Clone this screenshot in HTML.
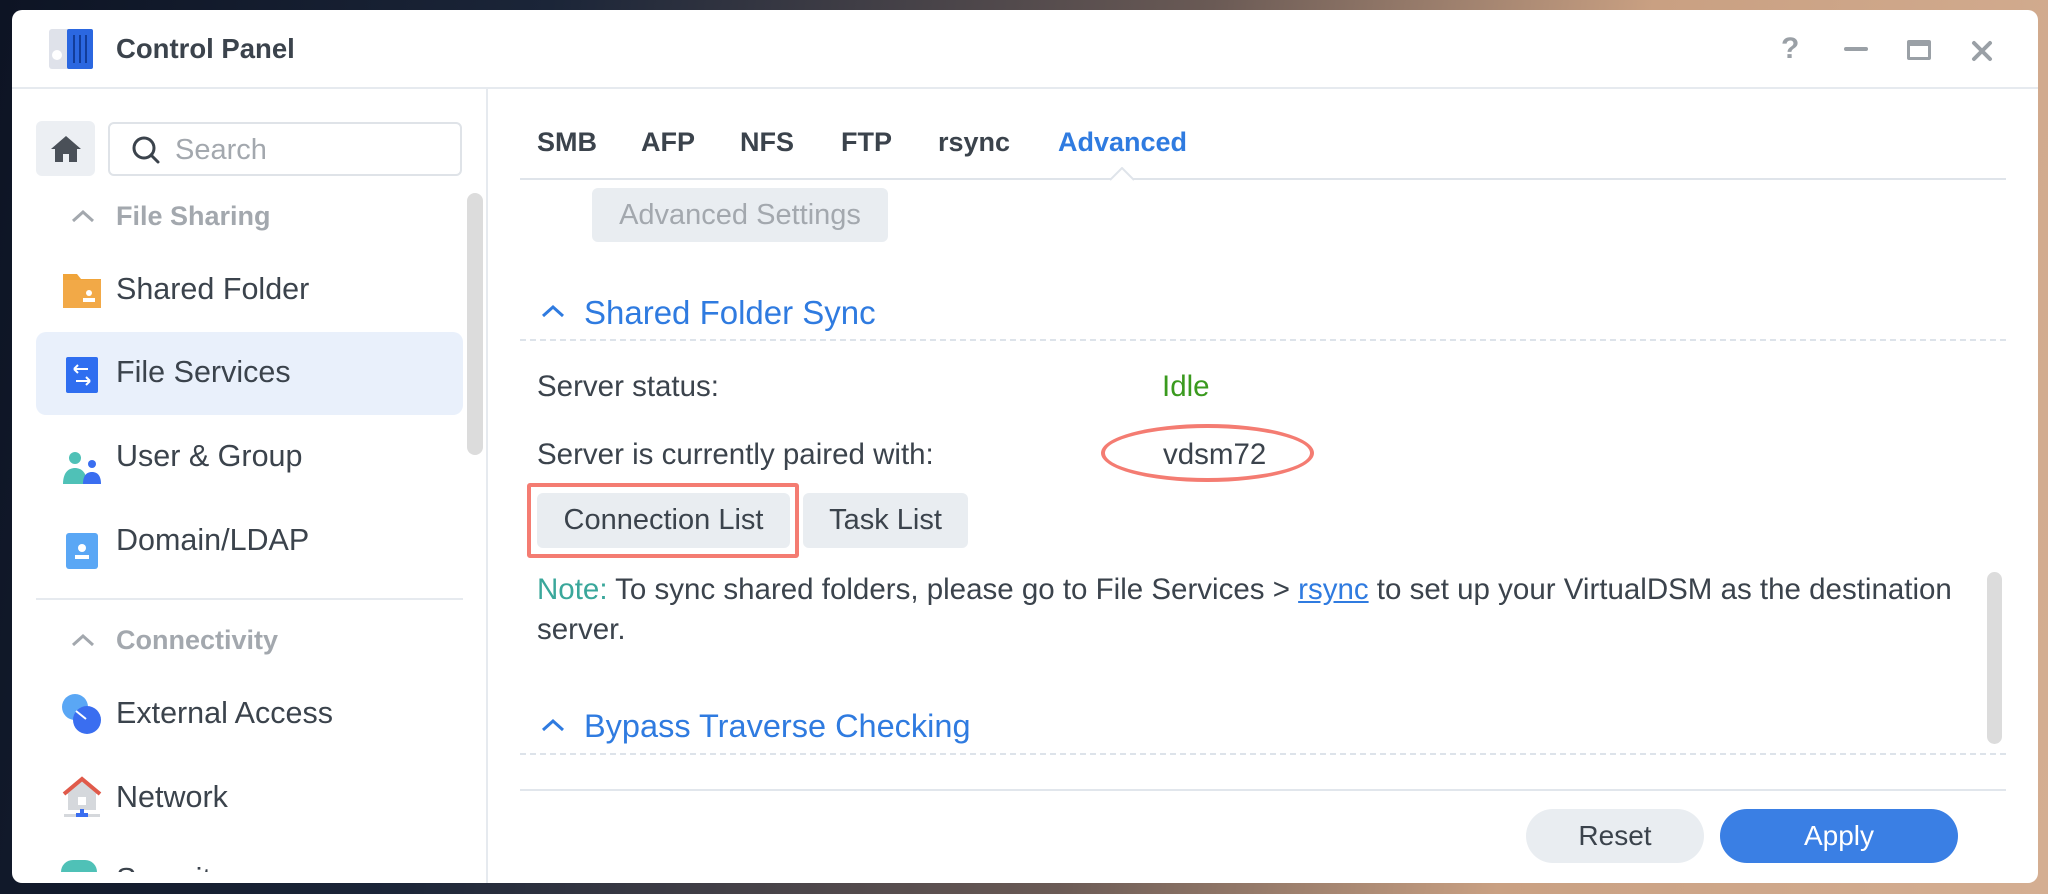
<!DOCTYPE html>
<html><head><meta charset="utf-8"><style>
*{margin:0;padding:0;box-sizing:border-box}
body{width:2048px;height:894px;overflow:hidden;position:relative;font-family:"Liberation Sans",sans-serif;color:#3b434c;
background:linear-gradient(100deg,#0d1424 0%,#1b2538 25%,#6a5a55 55%,#c9a082 75%,#d4ae92 100%);}
.a{position:absolute;white-space:nowrap}
.win{position:absolute;left:12px;top:10px;width:2026px;height:873px;background:#fff;border-radius:10px;overflow:hidden}
.t{font-size:30.5px;line-height:1}
.tab{font-size:27px;font-weight:bold;top:117px}
.r{font-size:29.5px}
.btn{position:absolute;background:#e9edf1;border-radius:6px;font-size:29px;display:flex;align-items:center;justify-content:center}
.dash{position:absolute;left:520px;width:1486px;border-top:2px dashed #dde3ea}
</style></head><body>
<div class="win">
<!-- header -->
<div class="a" style="left:35px;top:17px;width:48px;height:44px">
<svg width="48" height="44" viewBox="0 0 48 44"><rect x="2" y="2" width="44" height="40" rx="3" fill="#dfe2ea"/><rect x="20" y="2" width="26" height="40" rx="2" fill="#2b67e0"/><circle cx="10" cy="28" r="5" fill="#fff"/><path d="M27 8v28M33 8v28M39 8v28" stroke="#123d9a" stroke-width="2"/></svg></div>
<div class="a" style="left:104px;top:23px;font-size:27.5px;font-weight:bold;color:#3b434c">Control Panel</div>
<div class="a" style="left:1769px;top:22px;font-size:30px;font-weight:bold;color:#9aa0a6">?</div>
<div class="a" style="left:1832px;top:37px;width:24px;height:4px;background:#9aa0a6;border-radius:2px"></div>
<div class="a" style="left:1895px;top:30px;width:24px;height:20px;border:3px solid #9aa0a6;border-top-width:6px;border-radius:2px"></div>
<svg class="a" style="left:1959px;top:30px" width="22" height="22"><path d="M3 3L19 19M19 3L3 19" stroke="#9aa0a6" stroke-width="4" stroke-linecap="round"/></svg>
<div class="a" style="left:0;top:77px;width:2026px;height:2px;background:#e6eaef"></div>
<div class="a" style="left:474px;top:79px;width:2px;height:800px;background:#e6eaef"></div>

<!-- sidebar -->
<div class="a" style="left:24px;top:111px;width:59px;height:55px;background:#eceff3;border-radius:6px"></div>
<svg class="a" style="left:38px;top:124px" width="32" height="30" viewBox="0 0 32 30"><path d="M16 2L1 15h4v13h8v-8h6v8h8V15h4z" fill="#4a5058"/></svg>
<div class="a" style="left:96px;top:112px;width:354px;height:54px;border:2px solid #dfe3e8;border-radius:6px"></div>
<svg class="a" style="left:118px;top:124px" width="34" height="34"><circle cx="14" cy="14" r="10" stroke="#3b434c" stroke-width="3" fill="none"/><path d="M21 21l7 7" stroke="#3b434c" stroke-width="3" stroke-linecap="round"/></svg>
<div class="a" style="left:163px;top:124px;font-size:29px;color:#a3a8ae">Search</div>
<div class="a" style="left:455px;top:183px;width:16px;height:262px;background:#dcdcdc;border-radius:8px"></div>

<svg class="a" style="left:58px;top:198px" width="26" height="16"><path d="M3 13L13 4L23 13" stroke="#a3a8ae" stroke-width="3" fill="none"/></svg>
<div class="a" style="left:104px;top:191px;font-size:27px;font-weight:bold;color:#a3a8ae">File Sharing</div>

<svg class="a" style="left:49px;top:262px" width="42" height="38"><path d="M2 2h14l4 5h20v29H2z" fill="#f0a43a"/><rect x="2" y="8" width="38" height="28" fill="#f2a947"/><circle cx="28" cy="21" r="3" fill="#fff"/><rect x="22" y="26" width="12" height="4" fill="#fff"/></svg>
<div class="a t" style="left:104px;top:264px">Shared Folder</div>

<div class="a" style="left:24px;top:322px;width:427px;height:83px;background:#e9f0fb;border-radius:10px"></div>
<svg class="a" style="left:52px;top:345px" width="36" height="40"><rect x="2" y="2" width="32" height="36" rx="2" fill="#2f6ef0"/><path d="M10 14h14M10 14l4-4M10 14l4 4M26 26H12M26 26l-4-4M26 26l-4 4" stroke="#fff" stroke-width="2" fill="none"/></svg>
<div class="a t" style="left:104px;top:347px">File Services</div>

<svg class="a" style="left:49px;top:440px" width="42" height="36"><circle cx="14" cy="8" r="6" fill="#4fc1b7"/><path d="M2 34c0-12 6-16 12-16s12 4 12 16z" fill="#4fc1b7"/><circle cx="31" cy="14" r="4" fill="#3a6ef0"/><path d="M22 34c0-9 4-12 9-12s9 3 9 12z" fill="#3a6ef0"/></svg>
<div class="a t" style="left:104px;top:431px">User &amp; Group</div>

<svg class="a" style="left:52px;top:521px" width="36" height="40"><rect x="2" y="2" width="32" height="36" rx="3" fill="#5aa7f5"/><circle cx="18" cy="17" r="4" fill="#fff"/><rect x="11" y="24" width="14" height="4" fill="#fff"/></svg>
<div class="a t" style="left:104px;top:515px">Domain/LDAP</div>

<div class="a" style="left:24px;top:588px;width:427px;height:2px;background:#e6eaef"></div>
<svg class="a" style="left:58px;top:622px" width="26" height="16"><path d="M3 13L13 4L23 13" stroke="#a3a8ae" stroke-width="3" fill="none"/></svg>
<div class="a" style="left:104px;top:615px;font-size:27px;font-weight:bold;color:#a3a8ae">Connectivity</div>

<svg class="a" style="left:48px;top:682px" width="44" height="44"><circle cx="15" cy="15" r="13" fill="#5aa7f5"/><circle cx="27" cy="28" r="14" fill="#3a6ef0"/><path d="M16 19l10 8" stroke="#fff" stroke-width="2"/></svg>
<div class="a t" style="left:104px;top:688px">External Access</div>

<svg class="a" style="left:49px;top:766px" width="42" height="44"><path d="M21 3L3 18h4v16h28V18h4z" fill="#d5d8dc"/><path d="M3 18L21 3l18 15" stroke="#e05a4a" stroke-width="4" fill="none"/><rect x="17" y="21" width="8" height="8" fill="#fff"/><rect x="3" y="38" width="36" height="3" fill="#d5d8dc"/><rect x="19" y="33" width="4" height="6" fill="#3a6ef0"/><rect x="15" y="37" width="12" height="4" fill="#3a6ef0"/></svg>
<div class="a t" style="left:104px;top:772px">Network</div>
<div class="a" style="left:49px;top:850px;width:36px;height:12px;background:#4fc1b7;border-radius:12px 12px 0 0"></div>
<div class="a t" style="left:104px;top:854px;height:8px;overflow:hidden">Security</div>

<!-- content -->
<div class="a tab" style="left:525px">SMB</div>
<div class="a tab" style="left:629px">AFP</div>
<div class="a tab" style="left:728px">NFS</div>
<div class="a tab" style="left:829px">FTP</div>
<div class="a tab" style="left:926px">rsync</div>
<div class="a tab" style="left:1046px;color:#2f7be0">Advanced</div>
<div class="a" style="left:508px;top:168px;width:1486px;height:2px;background:#dfe4ea"></div>
<svg class="a" style="left:1098px;top:157px" width="24" height="14"><path d="M0 13L12 1L24 13" fill="#fff" stroke="#dfe4ea" stroke-width="2"/></svg>

<div class="btn" style="left:580px;top:178px;width:296px;height:54px;color:#a3a8ae">Advanced Settings</div>

<svg class="a" style="left:528px;top:292px" width="26" height="18"><path d="M3 14L13 5L23 14" stroke="#2f7be0" stroke-width="3" fill="none"/></svg>
<div class="a" style="left:572px;top:284px;font-size:33px;color:#2f7be0">Shared Folder Sync</div>
<div class="dash" style="left:508px;top:329px"></div>

<div class="a r" style="left:525px;top:360px">Server status:</div>
<div class="a r" style="left:1150px;top:360px;color:#3a9a1e">Idle</div>
<div class="a r" style="left:525px;top:428px">Server is currently paired with:</div>
<div class="a r" style="left:1151px;top:428px">vdsm72</div>
<div class="a" style="left:1089px;top:414px;width:213px;height:58px;border:4px solid #f47c72;border-radius:50%"></div>

<div class="btn" style="left:525px;top:483px;width:253px;height:55px">Connection List</div>
<div class="a" style="left:515px;top:473px;width:272px;height:75px;border:4px solid #f47c72;border-radius:3px"></div>
<div class="btn" style="left:791px;top:483px;width:165px;height:55px">Task List</div>

<div class="a r" style="left:525px;top:563px"><span style="color:#3aa79b">Note:</span> To sync shared folders, please go to File Services &gt; <span style="color:#2f7be0;text-decoration:underline">rsync</span> to set up your VirtualDSM as the destination</div>
<div class="a r" style="left:525px;top:603px">server.</div>

<div class="a" style="left:1975px;top:562px;width:15px;height:172px;background:#dcdcdc;border-radius:8px"></div>

<svg class="a" style="left:528px;top:706px" width="26" height="18"><path d="M3 14L13 5L23 14" stroke="#2f7be0" stroke-width="3" fill="none"/></svg>
<div class="a" style="left:572px;top:698px;font-size:32.5px;color:#2f7be0">Bypass Traverse Checking</div>
<div class="dash" style="left:508px;top:743px"></div>
<div class="a" style="left:508px;top:779px;width:1486px;height:2px;background:#e1e6ec"></div>

<div class="a" style="left:1514px;top:799px;width:178px;height:54px;background:#e9edf1;border-radius:27px;font-size:28px;display:flex;align-items:center;justify-content:center">Reset</div>
<div class="a" style="left:1708px;top:799px;width:238px;height:54px;background:#3a7fe4;border-radius:27px;font-size:28px;color:#fff;display:flex;align-items:center;justify-content:center">Apply</div>
</div>
</body></html>
